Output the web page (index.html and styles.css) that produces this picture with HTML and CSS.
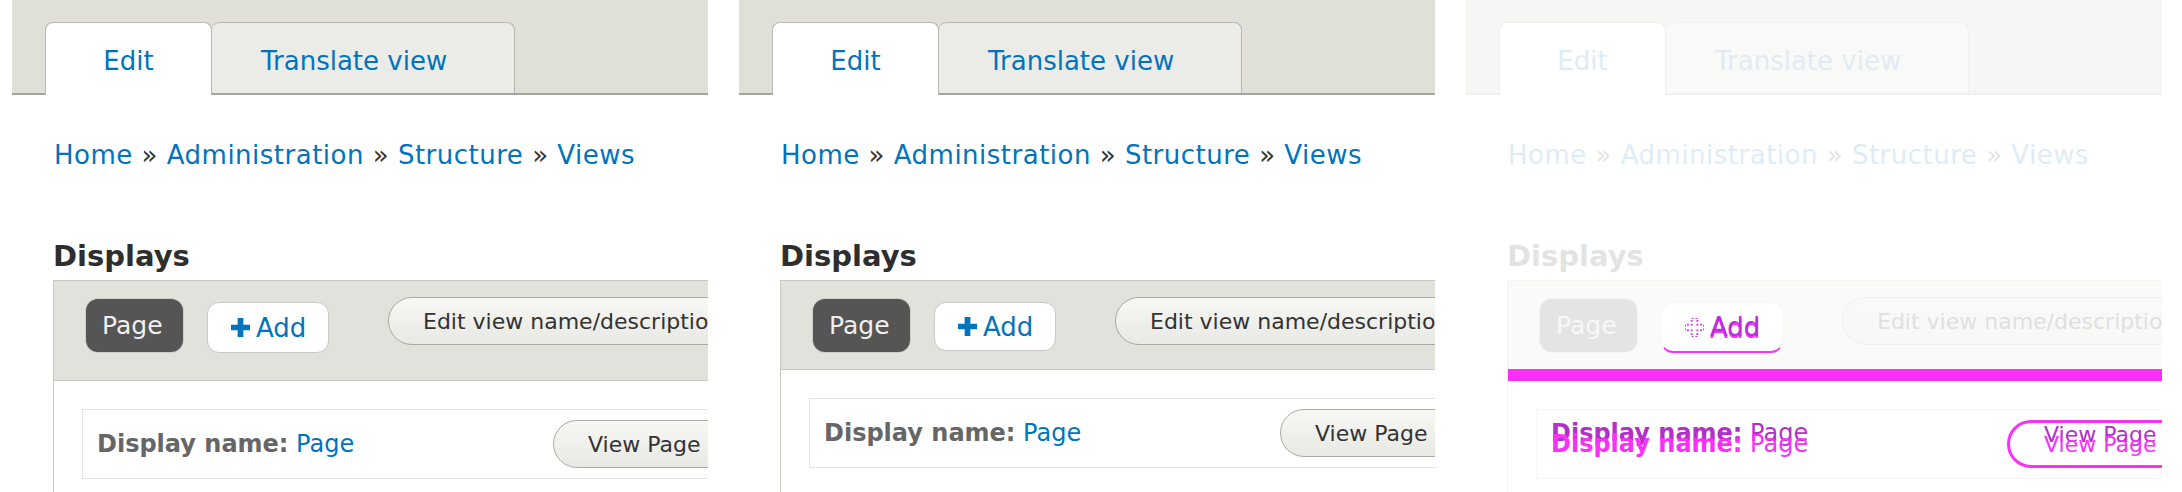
FILE: index.html
```html
<!DOCTYPE html>
<html lang="en">
<head>
<meta charset="utf-8">
<title>Views edit – visual diff</title>
<link rel="stylesheet" href="styles.css">
</head>
<body>
<div class="panels">

  <section class="panel">
    <div class="panel-inner">
      <div class="tabbar">
        <a class="tab tab-active">Edit</a>
        <a class="tab tab-translate">Translate view</a>
      </div>
      <nav class="breadcrumb"><a>Home</a><span class="sep"> » </span><a>Administration</a><span class="sep"> » </span><a>Structure</a><span class="sep"> » </span><a>Views</a></nav>
      <h2 class="heading">Displays</h2>
      <div class="box">
        <div class="box-head">
          <span class="btn-page">Page</span>
          <span class="btn-add"><svg class="plus" viewBox="0 0 20 20" width="20" height="20"><path d="M7 0h6v7h7v6h-7v7H7v-7H0V7h7z"/></svg>Add</span>
          <span class="pill btn-editname">Edit view name/description</span>
        </div>
        <div class="box-body">
          <div class="display-row">
            <div class="display-name"><b class="dn-label">Display name:</b> <a class="dn-value">Page</a></div>
            <span class="pill btn-view">View Page</span>
          </div>
        </div>
      </div>
    </div>
  </section>

  <section class="panel panel--after">
    <div class="panel-inner">
      <div class="tabbar">
        <a class="tab tab-active">Edit</a>
        <a class="tab tab-translate">Translate view</a>
      </div>
      <nav class="breadcrumb"><a>Home</a><span class="sep"> » </span><a>Administration</a><span class="sep"> » </span><a>Structure</a><span class="sep"> » </span><a>Views</a></nav>
      <h2 class="heading">Displays</h2>
      <div class="box">
        <div class="box-head">
          <span class="btn-page">Page</span>
          <span class="btn-add"><svg class="plus" viewBox="0 0 20 20" width="20" height="20"><path d="M7 0h6v7h7v6h-7v7H7v-7H0V7h7z"/></svg>Add</span>
          <span class="pill btn-editname">Edit view name/description</span>
        </div>
        <div class="box-body">
          <div class="display-row">
            <div class="display-name"><b class="dn-label">Display name:</b> <a class="dn-value">Page</a></div>
            <span class="pill btn-view">View Page</span>
          </div>
        </div>
      </div>
    </div>
  </section>

  <section class="panel panel--diff">
    <div class="panel-inner">
      <div class="tabbar">
        <a class="tab tab-active">Edit</a>
        <a class="tab tab-translate">Translate view</a>
      </div>
      <nav class="breadcrumb"><a>Home</a><span class="sep"> » </span><a>Administration</a><span class="sep"> » </span><a>Structure</a><span class="sep"> » </span><a>Views</a></nav>
      <h2 class="heading">Displays</h2>
      <div class="box">
        <div class="box-head">
          <span class="btn-page">Page</span>
          <span class="btn-add"><svg class="plus" viewBox="0 0 20 20" width="20" height="20"><path d="M7 0h6v7h7v6h-7v7H7v-7H0V7h7z"/></svg>Add</span>
          <span class="pill btn-editname">Edit view name/description</span>
        </div>
        <div class="box-body">
          <div class="display-row">
            <div class="display-name"><b class="dn-label">Display name:</b> <a class="dn-value">Page</a></div>
            <span class="pill btn-view">View Page</span>
          </div>
        </div>
      </div>
    </div>
  </section>

</div>
</body>
</html>
```

FILE: styles.css
```css
* { box-sizing: border-box; }

body {
  margin: 0;
  background: #fff;
  font-family: "DejaVu Sans", Verdana, sans-serif;
  color: #333;
}

.panels {
  display: flex;
  width: 2182px;
  height: 492px;
}

.panel {
  flex: none;
  width: 727px;
  min-width: 0;
  overflow: hidden;
  padding: 0 19px 0 12px;
}

.panel-inner {
  height: 492px;
  overflow: hidden;
}

/* ---------- primary tabs ---------- */
.tabbar {
  height: 95px;
  background: #e0e0d9;
  border-bottom: 2px solid #a5a5a0;
  display: flex;
  align-items: flex-end;
  padding: 22px 0 0 33px;
}

.tab {
  height: 71px;
  border: 1px solid #b8b8b3;
  border-bottom: 0;
  border-radius: 8px 8px 0 0;
  font-size: 26px;
  line-height: 30px;
  padding-top: 23px;
  color: #0074bd;
  white-space: nowrap;
}

.tab-active {
  width: 167px;
  height: 73px;
  margin-bottom: -2px;
  background: #fff;
  text-align: center;
}

.tab-translate {
  width: 303px;
  border-left: 0;
  background: #ebebe7;
  padding-left: 49px;
}

/* ---------- breadcrumb / heading ---------- */
.breadcrumb {
  margin: 45px 0 0 42px;
  font-size: 26px;
  line-height: 30px;
  letter-spacing: 0.5px;
  color: #0074bd;
  white-space: nowrap;
}

.breadcrumb .sep { color: #333; }

.heading {
  margin: 69px 0 0 41px;
  font-size: 29px;
  line-height: 34px;
  font-weight: bold;
  color: #2e2e2e;
}

/* ---------- displays box ---------- */
.box {
  margin: 7px 0 0 41px;
  width: 800px;
  height: 220px;
  border-top: 1px solid #c8c8c3;
  border-left: 1px solid #c8c8c3;
}

.box-head {
  height: 100px;
  background: #e1e2dc;
  border-bottom: 1px solid #c8c8c3;
  display: flex;
  align-items: flex-start;
  padding: 18px 0 0 32px;
}

.btn-page {
  width: 97px;
  height: 53px;
  background: #555;
  border-radius: 12px;
  box-shadow: 0 0 0 1px #cfcfca;
  color: #f0f0f0;
  font-size: 25px;
  display: flex;
  align-items: center;
  padding-left: 16px;
}

.btn-add {
  margin: 3px 0 0 24px;
  width: 122px;
  height: 51px;
  background: #fff;
  border: 1px solid #c9c9c6;
  border-radius: 12px;
  display: flex;
  align-items: center;
  gap: 6px;
  padding-left: 23px;
  color: #0074bd;
  font-size: 26px;
}

.plus {
  width: 19px;
  height: 19px;
  fill: #0074bd;
  flex: none;
}

.pill {
  height: 48px;
  border: 1px solid #a9a9a5;
  border-radius: 24px;
  background: linear-gradient(#f7f7f4, #e8e8e4);
  color: #333;
  font-size: 22px;
  display: flex;
  align-items: center;
  padding: 0 30px 0 34px;
  white-space: nowrap;
  flex: none;
}

.btn-editname {
  margin: -2px 0 0 59px;
}

.box-body {
  padding: 28px 0 0 28px;
}

.display-row {
  height: 70px;
  width: 720px;
  border: 1px solid #e3e3e3;
  display: flex;
  align-items: center;
  padding-left: 14px;
}

.display-name {
  flex: 0 0 456px;
  font-size: 24px;
  white-space: nowrap;
}

.dn-label { color: #666; }
.dn-value { color: #0074bd; }

/* ---------- "after" panel ---------- */
.panel--after .box-head { height: 89px; }
.panel--after .btn-add { height: 49px; }

/* ---------- diff panel ---------- */
.panel--diff .tabbar {
  background: #f6f6f5;
  border-bottom-color: #efefee;
}

.panel--diff .tab {
  border-color: #f0f0ef;
  color: #e2ebf4;
}

.panel--diff .tab-active { background: #fff; }
.panel--diff .tab-translate { background: #f9f9f8; }

.panel--diff .breadcrumb,
.panel--diff .heading,
.panel--diff .btn-page,
.panel--diff .btn-editname {
  opacity: 0.13;
}

.panel--diff .box { border-color: #f3f3f1; }

.panel--diff .box-head {
  background: #fafaf9;
  border-bottom: 12px solid #f931f7;
}

.panel--diff .btn-add {
  border-color: #f7f7f6;
  border-bottom: 2px solid #f931f7;
  color: #b82ed8;
  text-shadow: 0 2px 0 #f931f7;
}

.panel--diff .plus {
  fill: none;
  stroke: #c93ae0;
  stroke-width: 2;
  stroke-dasharray: 2 2;
}

.panel--diff .display-row { border-color: #f6f6f6; }

.panel--diff .dn-label,
.panel--diff .dn-value {
  color: #f931f7;
  text-shadow: 0 -11px 0 #b22fc9;
}

.panel--diff .btn-view {
  border: 3px solid #f931f7;
  background: #fff;
  color: #f931f7;
  text-shadow: 0 -10px 0 #b22fc9;
}
```
